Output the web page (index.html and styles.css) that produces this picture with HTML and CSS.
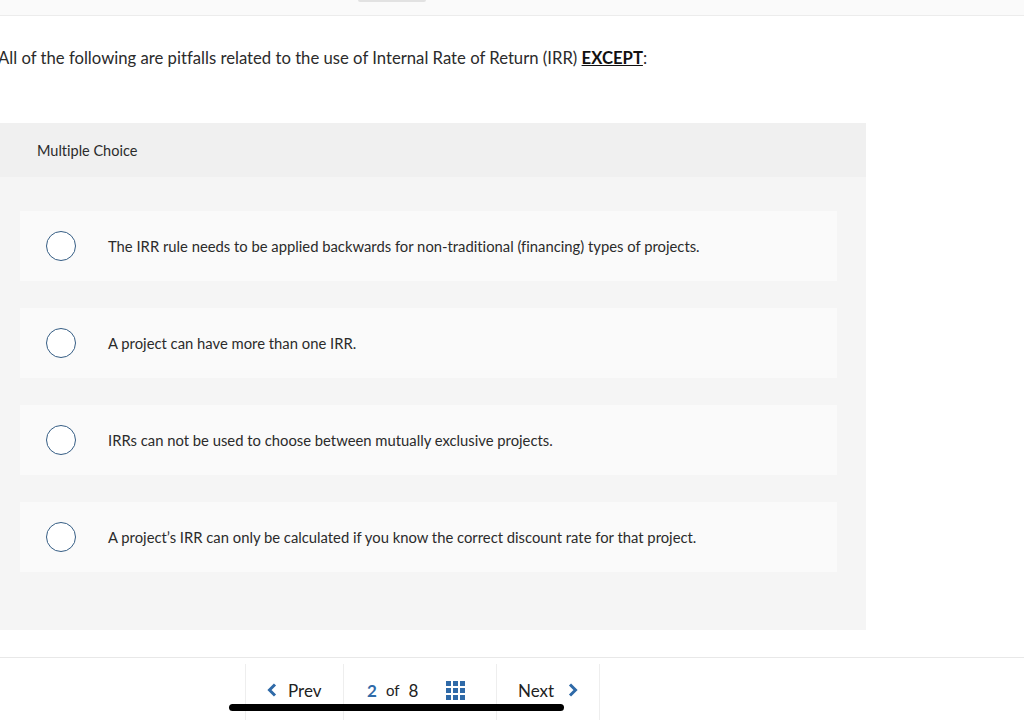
FILE: index.html
```html
<!DOCTYPE html>
<html>
<head>
<meta charset="utf-8">
<link rel="stylesheet" href="styles.css">
</head>
<body>
<div class="topbar"><div class="tab"></div></div>
<p class="question">All of the following are pitfalls related to the use of Internal Rate of Return (IRR) <b class="except">EXCEPT</b>:</p>
<section class="panel">
  <div class="panel-head">Multiple Choice</div>
  <div class="panel-body">
    <div class="option"><span class="radio"></span><span class="opt-text">The IRR rule needs to be applied backwards for non-traditional (financing) types of projects.</span></div>
    <div class="option"><span class="radio"></span><span class="opt-text">A project can have more than one IRR.</span></div>
    <div class="option"><span class="radio"></span><span class="opt-text">IRRs can not be used to choose between mutually exclusive projects.</span></div>
    <div class="option"><span class="radio"></span><span class="opt-text">A project’s IRR can only be calculated if you know the correct discount rate for that project.</span></div>
  </div>
</section>
<nav class="footer">
  <div class="nav">
    <div class="nav-item prev">
      <svg class="chev" width="10" height="14" viewBox="0 0 10 14"><polyline points="8,1.5 2.5,7 8,12.5" fill="none" stroke="#2f6aa8" stroke-width="3"/></svg>
      <span>Prev</span>
    </div>
    <div class="nav-item mid">
      <span class="cur">2</span><span class="of">of</span><span class="tot">8</span>
      <svg class="grid" width="19" height="19" viewBox="0 0 19 19" fill="#2f6aa8">
        <rect x="0" y="0" width="5" height="5"/><rect x="7" y="0" width="5" height="5"/><rect x="14" y="0" width="5" height="5"/>
        <rect x="0" y="7" width="5" height="5"/><rect x="7" y="7" width="5" height="5"/><rect x="14" y="7" width="5" height="5"/>
        <rect x="0" y="14" width="5" height="5"/><rect x="7" y="14" width="5" height="5"/><rect x="14" y="14" width="5" height="5"/>
      </svg>
    </div>
    <div class="nav-item next">
      <span>Next</span>
      <svg class="chev" width="10" height="14" viewBox="0 0 10 14"><polyline points="2,1.5 7.5,7 2,12.5" fill="none" stroke="#2f6aa8" stroke-width="3"/></svg>
    </div>
  </div>
  <div class="homebar"></div>
</nav>
</body>
</html>
```
FILE: styles.css
```css
* { box-sizing: border-box; }
html, body { margin: 0; padding: 0; }
body {
  background: #fff;
  font-family: Lato, "Liberation Sans", sans-serif;
  font-variant-ligatures: none;
  color: #2b2b2b;
  width: 1024px;
  height: 720px;
  overflow: hidden;
  position: relative;
}
.topbar {
  height: 16px;
  background: #fafafa;
  border-bottom: 1px solid #ececec;
  position: relative;
}
.tab {
  position: absolute;
  left: 358px;
  top: 0;
  width: 68px;
  height: 2px;
  background: #e2e2e2;
  border-radius: 0 0 6px 6px;
}
.question {
  margin: 32px 0 0 -2px;
  font-size: 16.7px;
  line-height: 20px;
  color: #2b2b2b;
}
.except {
  text-decoration: underline;
  font-weight: 700;
  color: #111;
}
.panel {
  margin-top: 55px;
  width: 866px;
  background: #f5f5f5;
}
.panel-head {
  height: 54px;
  background: #f0f0f0;
  padding-left: 37px;
  display: flex;
  align-items: center;
  font-size: 14.5px;
  color: #2b2b2b;
}
.panel-body {
  padding: 34px 29px 58px 20px;
  display: flex;
  flex-direction: column;
  gap: 27px;
}
.option {
  height: 70px;
  background: #fafafa;
  display: flex;
  align-items: center;
  padding-left: 26px;
}
.radio {
  width: 30px;
  height: 30px;
  border: 1.5px solid #355d84;
  border-radius: 50%;
  background: #fff;
  flex: none;
}
.opt-text {
  margin-left: 32px;
  font-size: 14.8px;
  color: #2b2b2b;
}
.footer {
  margin-top: 27px;
  border-top: 1px solid #e8e8e8;
  height: 63px;
  position: relative;
}
.nav {
  margin-left: 245px;
  margin-top: 6px;
  height: 56px;
  display: flex;
}
.nav-item {
  display: flex;
  align-items: center;
  border-left: 1px solid #eeeeee;
  font-size: 17px;
  color: #222;
  padding-bottom: 4px;
}
.nav-item:last-child { border-right: 1px solid #eeeeee; }
.prev { width: 98px; padding-left: 21px; gap: 11px; }
.mid { width: 153px; padding-left: 23px; }
.next { width: 104px; padding-left: 21px; gap: 14px; }
.cur { color: #2f6aa8; font-weight: 700; }
.of { font-size: 15px; margin: 0 9px 0 9px; }
.grid { margin-left: 28px; }
.homebar {
  position: absolute;
  left: 229px;
  top: 46px;
  width: 335px;
  height: 7px;
  background: #000;
  border-radius: 4px;
}
```
